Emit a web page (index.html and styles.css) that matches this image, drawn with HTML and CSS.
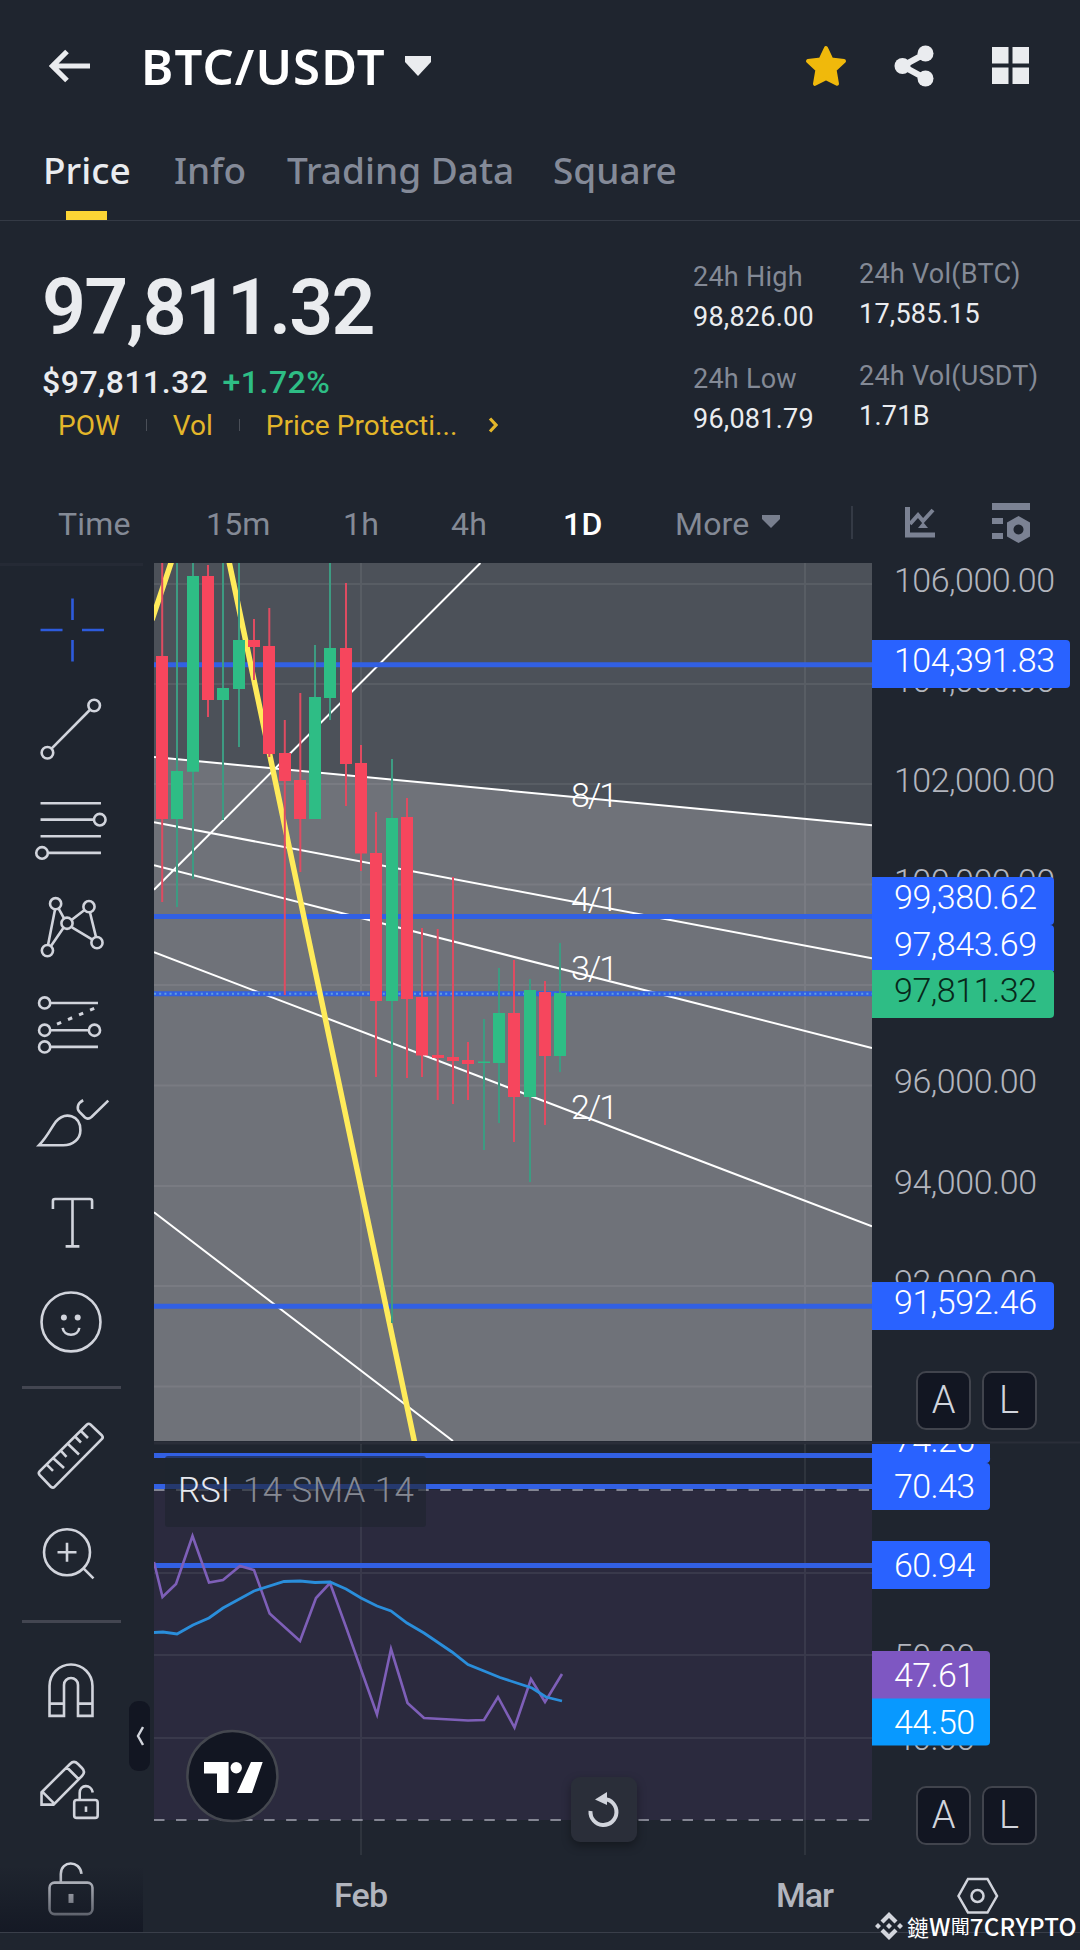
FILE: index.html
```html
<!DOCTYPE html>
<html lang="en">
<head>
<meta charset="utf-8">
<title>BTC/USDT</title>
<link rel="stylesheet" href="styles.css">
</head>
<body>
<main class="app">
  <header class="header">
    <svg class="back" width="42" height="34" viewBox="0 0 42 34"><path d="M41 17H4M18 2.500 3.500 17 18 31.500" fill="none" stroke="#eaecef" stroke-width="5.200"/></svg>
    <h1 class="pair">BTC/USDT</h1>
    <svg class="pair-caret" width="26" height="20" viewBox="0 0 26 20"><path d="M0 0H26V6L13 20 0 6Z" fill="#eaecef"/></svg>
    <svg class="act" width="42" height="42" viewBox="0 0 42 42"><path d="M21 3 26.300 14.400 39 16 29.600 24.800 32 38.800 21 33.200 10 38.800 12.400 24.800 3 16 15.700 14.400Z" fill="#f0b90b" stroke="#f0b90b" stroke-width="4" stroke-linejoin="round"/></svg>
    <svg class="act" width="40" height="42" viewBox="0 0 40 42"><path d="M31.500 8.500 8.500 21 31.500 33.500" fill="none" stroke="#eaecef" stroke-width="6"/><g fill="#eaecef"><circle cx="31.500" cy="8.500" r="8"/><circle cx="8.500" cy="21" r="8"/><circle cx="31.500" cy="33.500" r="8"/></g></svg>
    <svg class="act" width="37" height="37" viewBox="0 0 37 37"><path d="M0 0H16.500V16.500H0ZM20.500 0H37V16.500H20.500ZM0 20.500H16.500V37H0ZM20.500 20.500H37V37H20.500Z" fill="#eaecef"/></svg>
  </header>

  <nav class="tabs">
    <span class="tab tab-on">Price</span><span class="tab">Info</span><span class="tab">Trading Data</span><span class="tab">Square</span>
  </nav>

  <section class="ticker">
    <div class="quote">
      <div class="last">97,811.32</div>
      <div class="fiat"><span class="fiat-price">$97,811.32</span><span class="change">+1.72%</span></div>
      <div class="tags"><span>POW</span><i></i><span>Vol</span><i></i><span class="protect">Price Protecti...</span>
        <svg width="10" height="16" viewBox="0 0 10 16"><path d="M2 1.500 8 8 2 14.500" fill="none" stroke="#e3b62a" stroke-width="3.200"/></svg></div>
    </div>
    <dl class="stats"><dt>24h High</dt><dd>98,826.00</dd><dt>24h Low</dt><dd>96,081.79</dd></dl>
    <dl class="stats stats-vol"><dt>24h Vol(BTC)</dt><dd>17,585.15</dd><dt>24h Vol(USDT)</dt><dd>1.71B</dd></dl>
  </section>

  <nav class="intervals">
    <span>Time</span><span>15m</span><span>1h</span><span>4h</span><span class="on">1D</span>
    <span class="more">More<svg width="18" height="13" viewBox="0 0 18 13"><path d="M0 0H18V4L9 13 0 4Z" fill="#787f8e"/></svg></span>
    <i class="bar"></i>
    <svg class="indicator" width="30" height="31" viewBox="0 0 30 31"><path d="M2.500 0V28H30" fill="none" stroke="#7b8293" stroke-width="5"/><path d="M5 17 13 8 18 14 28 3" fill="none" stroke="#7b8293" stroke-width="4"/><path d="M13 21 18 15 23 21Z" fill="#7b8293"/></svg>
    <svg class="settings" width="38" height="40" viewBox="0 0 38 40"><path d="M0 0H38V7H0ZM0 15H11V21H0ZM0 30H11V36H0Z" fill="#7b8293"/><path fill-rule="evenodd" d="M26.500 13 38 19.500V33.500L26.500 40 15 33.500V19.500ZM26.500 21.500a5 5 0 1 0 .01 0Z" fill="#7b8293"/></svg>
  </nav>

  <section class="workspace">
    <aside class="tools">
      <svg viewBox="-40 -50 80 99"><path class="cross" d="M1.500-31.500V-10M1.500 10V31.500M-30.500 0H-8.500M11 0H33"/></svg>
      <svg viewBox="-40 -50 80 99"><path d="M-19.500 19.700 19.300-19.500"/><circle cx="23.200" cy="-23.500" r="5.800"/><circle cx="-23.600" cy="23.800" r="5.800"/></svg>
      <svg viewBox="-40 -50 80 99"><path d="M-30.500-24.700H30M-30.500-8.300H22.500M-30.500 8.300H30M-23 25H30"/><circle cx="28.800" cy="-8.300" r="5.800"/><circle cx="-29" cy="25" r="5.800"/></svg>
      <svg viewBox="-40 -50 80 99"><path d="M-16-17.500-23 18M-12.500-18.500-7-8.500M-7.500.8-20 19M.5-7 13.500-17M1 .5 21 12.500M19-14.500 25 10"/><circle cx="-15.400" cy="-23.300" r="5.600"/><circle cx="18" cy="-20.300" r="5.600"/><circle cx="-4" cy="-3.700" r="5.600"/><circle cx="26" cy="15.700" r="5.600"/><circle cx="-23.600" cy="23.700" r="5.600"/></svg>
      <svg viewBox="-40 -50 80 99"><path d="M-20.500-23H27M-20.500 4.300H17.500M-20.500 21H27"/><path d="M-14-1.700 24-18" stroke-dasharray="4.500 7.500" stroke-width="3"/><circle cx="-26.400" cy="-23" r="5.600"/><circle cx="-26.400" cy="4.300" r="5.600"/><circle cx="23.500" cy="4.300" r="5.600"/><circle cx="-26.400" cy="21" r="5.600"/></svg>
      <svg viewBox="-40 -50 80 99"><path d="M-32 21.300C-23 12-20 4-15.400-2-6-13 9.400-9 9.400 6.300 9.400 15 2 21.300-7.800 21.300ZM12.200-23.700C7-21 5-16 8.500-12L14-6.500Q17-4 20.500-7L37.300-23.300"/></svg>
      <svg viewBox="-40 -50 80 99"><path d="M-18.100-14V-22Q-18.100-24-16-24H19Q21.100-24 21.100-22V-14M1.500-24V23.500M-5.400 23.500H8.400"/></svg>
      <svg viewBox="-40 -50 80 99"><circle r="29.500"/><g class="solid"><circle cx="-7.100" cy="-4.500" r="3"/><circle cx="6.700" cy="-4.500" r="3"/></g><path d="M-8.300 6C-7.500 15 7.500 15 8.300 6"/></svg>
      <hr>
      <svg viewBox="-40 -50 80 99"><path d="M16-30.500Q17.700-32 19.500-30.500L31-19.500Q32.500-17.700 31-16L-16.500 32Q-18 33.500-20 32L-31.500 20Q-33 18-31.500 16.500ZM-24.500 9.500-18 16M-18 3-7 13M-10.500-4.500-4.500 2M-3.500-11.500 8-.5M4-18.500 10-12.500M9.500-24.500 17-17"/></svg>
      <svg viewBox="-40 -50 80 99"><circle cx="-4" cy="-1.700" r="23"/><path d="M-13.500-1.700H5.500M-4-11.200V7.800M12 14 22.500 24.500"/></svg>
      <hr class="wide">
      <svg viewBox="-40 -50 80 99"><path d="M-21.500 25V-5A21.500 21.500 0 0 1 21.500-5V25H7V-6A7 7 0 0 0-7-6V25ZM-21.500 12.700H-7M7 12.700H21.500"/></svg>
      <svg viewBox="-40 -50 80 99"><path d="M-29.500 14.700V2.300L-1-26Q3-30 7-26L11-22Q15-18 11-14L-17.500 14.700ZM-28 2.500-17 13.500M-4-22.500 7.500-11M8.700 10V3C8.700-6 20.500-6 21.800 2.500"/><rect x="3.200" y="10" width="23.500" height="18" rx="2.500"/><path d="M15 16.500V22"/></svg>
      <svg viewBox="-40 -50 80 99"><path d="M-10.200-7V-15C-10-29 9-29 10.500-15"/><rect x="-21.500" y="-6.300" width="43" height="31.500" rx="5"/><path d="M0 5V14" stroke-width="5"/></svg>
      <div class="fade"></div>
      <div class="handle"><svg width="8" height="20" viewBox="0 0 8 20"><path d="M7 1 2 10 7 19" fill="none" stroke="#d1d4dc" stroke-width="2.400"/></svg></div>
    </aside>

    <!-- plot: price pane, RSI pane and time scale -->
    <svg class="plot" width="718" height="1369" viewBox="154 563 718 1369">
      <defs><clipPath id="price"><rect x="154" y="563" width="718" height="878"/></clipPath></defs>
      <rect x="154" y="563" width="718" height="878" fill="#4c5159"/>
      <path d="M154 757 872 825.300V1441H154Z" fill="#6f7279"/>
      <path class="grid" d="M154 584H872M154 684H872M154 784H872M154 884.500H872M154 985H872M154 1085.500H872M154 1186H872M154 1286H872M154 1386.500H872M361 563V1441M805 563V1441"/>
      <g clip-path="url(#price)">
        <path class="gann" d="M154 757 872 825.300M154 822.300 872 958.300M154 865.300 872 1048M154 952.300 872 1226.300M154 1212.300 453 1441M154 889.700 480.400 563"/>
        <path class="level" d="M154 664.700H872M154 916.500H872M154 993.700H872M154 1306.300H872"/>
        <path d="M154 993.700H872" stroke="#61a0dc" stroke-width="2" stroke-dasharray="2 3.200"/>
        <path d="M152 620 172 560M228.700 560 414.500 1442" fill="none" stroke="#ffeb5a" stroke-width="5.500"/>
        <path d="M177 563V907M193 563V879M223 563V820M239 563V747M315 645V819M330 563V720M392 759V1323M484 1019V1150M499 968V1123M530 979V1182M560 943V1072" stroke="#3d9b82" stroke-width="2"/>
        <path d="M162.200 563V902M208 565V717M254 619V680M269.300 608V757M284.800 720V995M300.300 693V872M346 583V806M361 745V871M376 812V1077M407 798V1078M422 928V1077M437.700 929V1100M453 877V1104M468 1042V1100M514 960V1142M545 981V1125" stroke="#df4b61" stroke-width="2"/>
        <path d="M171 771h12v48h-12zM187 576h12v195.700h-12zM217 688h12v12h-12zM233 640h12v49h-12zM309 697h12v122h-12zM324 648h12v50h-12zM386 818h12v183h-12zM478 1061.500h12v1.500h-12zM493 1013h12v50h-12zM524 990h12v107h-12zM554 993h12v63h-12z" fill="#2ebd85"/>
        <path d="M156 656h12v163h-12zM202 576h12v124h-12zM248 640h12v7h-12zM263 646h12v108h-12zM279 753h12v28h-12zM294 780h12v39h-12zM340 648h12v116h-12zM355 763h12v90.500h-12zM370 853h12v148h-12zM401 817h12v182h-12zM416 997h12v58.500h-12zM432 1055h12v3h-12zM447 1057h12v4h-12zM462 1060h12v4h-12zM508 1013h12v84h-12zM539 992h12v64h-12z" fill="#f6465d"/>
        <g class="gann-label"><text x="571" y="806.500" textLength="47">8/1</text><text x="571" y="911" textLength="47">4/1</text><text x="571" y="980" textLength="47">3/1</text><text x="571" y="1119" textLength="47">2/1</text></g>
      </g>

      <path d="M154 1443H872" stroke="#2a2e39" stroke-width="3"/>
      <rect x="154" y="1490" width="718" height="330" fill="#2b2a3e"/>
      <path class="grid grid-rsi" d="M154 1573H872M154 1655H872M154 1738H872M361 1444V1855M805 1444V1855"/>
      <path class="level" d="M154 1455.500H872M154 1486.500H872M154 1565.500H872"/>
      <path d="M154 1490H872M154 1820H872" stroke="#848693" stroke-width="2" stroke-dasharray="10.500 11.520"/>
      <polyline points="154,1562 162.500,1597 176,1584 192.500,1536 209,1582.500 223,1580 240,1566 254,1570 269.600,1613.500 300,1641 316,1598 330,1583 346,1627 377,1714.500 391,1649 407.500,1703 424,1718 468,1720.500 484,1720 498,1697 514.500,1727.500 531,1679 545,1702 562,1674" fill="none" stroke="#7e5fb8" stroke-width="2.600"/>
      <polyline points="154,1632.500 163,1632 177,1634 193,1625 209,1618 223,1608 254,1591 284,1581.500 300,1581 315,1582.500 330,1582 346,1589 361,1598 377,1606 391,1611 407,1623 424,1633 452,1652 468,1664.500 484,1671 500,1677.500 532,1688 546,1697 562,1701" fill="none" stroke="#2a8edb" stroke-width="2.800"/>
      <rect x="165" y="1456" width="261" height="71" rx="3" fill="#1e2530" fill-opacity=".65"/>
      <text class="rsi-name" x="178" y="1502" textLength="52">RSI</text><text class="rsi-args" x="243" y="1502" textLength="171">14 SMA 14</text>
      <circle cx="232.400" cy="1776" r="45" fill="#121622" stroke="#44474f" stroke-width="2.500"/>
      <path d="M204 1762H228.600V1793H217V1773.500H204ZM251 1762H262.700L252 1793H237Z" fill="#fff"/><circle cx="236.200" cy="1767.700" r="5.700" fill="#fff"/>
      <rect class="reset" x="571" y="1777" width="66" height="65" rx="9"/>
      <path d="M590.500 1811A13 13 0 1 0 604 1799" fill="none" stroke="#d1d4dc" stroke-width="4"/><path d="M595 1799.500 607 1792V1805Z" fill="#d1d4dc"/>
      <g class="months"><text x="361" y="1907" textLength="54">Feb</text><text x="805" y="1907" textLength="58">Mar</text></g>
    </svg>

    <!-- price scale -->
    <svg class="scale" width="208" height="1369" viewBox="872 563 208 1369">
      <g class="tick"><text x="894" y="592" textLength="161">106,000.00</text><text x="894" y="692" textLength="161">104,000.00</text><text x="894" y="792" textLength="161">102,000.00</text><text x="894" y="893" textLength="161">100,000.00</text><text x="894" y="1093" textLength="143">96,000.00</text><text x="894" y="1194" textLength="143">94,000.00</text><text x="894" y="1294" textLength="143">92,000.00</text><text x="894" y="1668" textLength="81">50.00</text><text x="894" y="1749.500" textLength="81">40.00</text></g>
      <path d="M872 640h194a4 4 0 0 1 4 4v40a4 4 0 0 1-4 4h-194zM872 877h178a4 4 0 0 1 4 4v40a4 4 0 0 1-4 4 4 4 0 0 1 4 4v42h-182zM872 1282h178a4 4 0 0 1 4 4v40a4 4 0 0 1-4 4h-178zM872 1444h118v14a4 4 0 0 1-4 5 4 4 0 0 1 4 4v39a4 4 0 0 1-4 4h-114zM872 1541h114a4 4 0 0 1 4 4v40a4 4 0 0 1-4 4h-114z" fill="#2962ff"/>
      <path d="M872 970h178a4 4 0 0 1 4 4v40a4 4 0 0 1-4 4h-178z" fill="#2ebd85"/>
      <path d="M872 1651h114a4 4 0 0 1 4 4v44h-118z" fill="#7e57c2"/>
      <path d="M872 1698.500h118v43a4 4 0 0 1-4 4h-114z" fill="#0899ff"/>
      <clipPath id="rsiTop"><rect x="872" y="1444" width="208" height="30"/></clipPath>
      <g class="tick tick-on"><text x="894" y="672" textLength="161">104,391.83</text><text x="894" y="909" textLength="143">99,380.62</text><text x="894" y="955.500" textLength="143">97,843.69</text><text class="last-tick" x="894" y="1001.700" textLength="143">97,811.32</text><text x="894" y="1313.700" textLength="143">91,592.46</text><text x="894" y="1452" textLength="81" clip-path="url(#rsiTop)">74.26</text><text x="894" y="1498" textLength="81">70.43</text><text x="894" y="1577" textLength="81">60.94</text><text x="894" y="1687" textLength="81">47.61</text><text x="894" y="1734" textLength="81">44.50</text></g>
      <path d="M872 1442.500H1080" stroke="#2a2e39" stroke-width="2"/>
      <g fill="#121622" stroke="#41444d" stroke-width="2"><rect x="917" y="1372" width="53" height="57" rx="9"/><rect x="983" y="1372" width="53" height="57" rx="9"/><rect x="917" y="1787" width="53" height="57" rx="9"/><rect x="983" y="1787" width="53" height="57" rx="9"/></g>
      <g class="mode"><text x="943.500" y="1413">A</text><text x="1009" y="1413">L</text><text x="943.500" y="1828">A</text><text x="1009" y="1828">L</text></g>
      <g fill="none" stroke="#d1d4dc" stroke-width="2.500"><path d="M968 1879H987.500L997 1896 987.500 1912.500H968L958.500 1896Z"/><circle cx="977.500" cy="1896" r="6"/></g>
    </svg>
  </section>

  <footer class="credit">
    <svg width="28" height="28" viewBox="0 0 28 28"><path d="M14 0 22.500 8.500 19.500 11.500 14 6 8.500 11.500 5.500 8.500ZM14 28 22.500 19.500 19.500 16.500 14 22 8.500 16.500 5.500 19.500ZM14 11 17 14 14 17 11 14ZM3 11 6 14 3 17 0 14ZM25 11 28 14 25 17 22 14Z" fill="#d3d6dd"/></svg>
    <span class="credit-name"><span class="han">鏈</span>W<span class="han han-narrow">聞</span>7CRYPTO</span>
  </footer>
</main>
</body>
</html>
```
FILE: styles.css
```css
* { box-sizing: border-box; margin: 0; padding: 0; }
body { background: #1f252f; color: #eaecef; font-family: Roboto, "Liberation Sans", sans-serif; }
.app { position: relative; width: 1080px; height: 1950px; overflow: hidden; }

.header { display: flex; align-items: center; height: 131px; padding: 0 31px 0 49px; }
.pair { margin-left: 50px; width: 258px; font: 600 49px/60px "Noto Sans", sans-serif; letter-spacing: 1.1px; color: #fff; white-space: nowrap; }
.pair-caret { margin-left: 6px; margin-right: 374px; }
.act { flex: none; margin-right: 47px; }
.act + .act { margin-right: 58px; }
.act + .act + .act { margin-right: 0; }
.back, .pair-caret { flex: none; }

.tabs { display: grid; grid-template-columns: 131px 113px 266px auto; height: 90px; padding-left: 43px; border-bottom: 1px solid #343a45; font: 500 37px/77px "Noto Sans", sans-serif; color: #848a98; white-space: nowrap; }
.tab-on { position: relative; color: #eaecef; }
.tab-on::after { content: ""; position: absolute; left: 23px; bottom: 0; width: 41px; height: 9px; background: #fcd535; }

.ticker { display: grid; grid-template-columns: 651px 166px auto; height: 264px; padding: 36px 0 0 42px; white-space: nowrap; }
.last { font-size: 77px; line-height: 102px; height: 100px; font-weight: 600; letter-spacing: -1.8px; }
.fiat { display: flex; gap: 14px; font-size: 32px; line-height: 50px; font-weight: 500; letter-spacing: .5px; }
.change { color: #2ebd85; }
.tags { display: flex; align-items: center; height: 36px; padding-left: 16px; font-size: 28px; color: #e3b62a; }
.tags i { width: 1px; height: 12px; margin: 0 26px; background: #4a4f58; }
.protect { letter-spacing: .1px; }
.tags svg { margin-left: 30px; }
.stats { font-size: 27px; line-height: 40px; letter-spacing: .25px; }
.stats-vol { margin-top: -3px; }
.stats dt { color: #848a96; }
.stats dd { margin-bottom: 22px; }

.intervals { display: grid; grid-template-columns: 148px 137px 108px 112px 112px 176px 54px 87px auto; align-items: center; height: 78px; padding-left: 58px; font-size: 32px; letter-spacing: .2px; color: #848a96; white-space: nowrap; }
.on { color: #fff; font-weight: 500; }
.more { display: flex; align-items: center; gap: 12px; }
.more svg { margin-top: -6px; }
.bar { width: 2px; height: 33px; margin-top: -4px; background: #343a45; }
.indicator { margin-top: -4px; }
.settings { margin-top: -2px; }

.workspace { display: grid; grid-template-columns: 154px 718px 208px; height: 1370px; border-bottom: 1px solid #3a3f4a; }
.tools { position: relative; display: flex; flex-direction: column; width: 143px; height: 1369px; padding-top: 14px; border-top: 3px solid #252a35; }
.tools > svg { flex: none; width: 80px; height: 98.9px; margin-left: 31px; fill: none; stroke: #d1d4dc; stroke-width: 2.600; overflow: visible; }
.tools .cross { stroke: #2d5bdc; }
.tools .solid { fill: #d1d4dc; stroke: none; }
.tools hr { flex: none; width: 99px; height: 3px; margin: 15px 0 16px 22px; border: 0; background: #434651; }
.tools .wide { margin: 17px 0 18px 22px; }
.fade { position: absolute; left: 0; bottom: 0; width: 143px; height: 66px; background: linear-gradient(rgba(18,22,34,0), rgba(18,22,34,.8)); }
.handle { position: absolute; left: 129px; top: 1135px; width: 21px; height: 70px; display: grid; place-items: center; border-radius: 9px; background: #121622; }

.plot, .scale { display: block; }
.grid { fill: none; stroke: #fff; stroke-opacity: .07; stroke-width: 2; }
.gann { fill: none; stroke: #fff; stroke-width: 2; }
.level { fill: none; stroke: #3260e3; stroke-width: 5; }
.gann-label { fill: #fff; font-size: 34px; font-weight: 300; }
.rsi-name { fill: #e6e8ee; font-size: 35px; font-weight: 300; }
.rsi-args { fill: #868993; font-size: 35px; font-weight: 300; }
.reset { fill: #2a2e39; filter: drop-shadow(0 4px 5px rgba(0,0,0,.35)); }
.months { fill: #b2b5be; font-size: 34px; font-weight: 500; text-anchor: middle; }
.tick { fill: #b2b5be; font-size: 34px; font-weight: 300; }
.tick-on { fill: #fff; }
.tick-on .last-tick { fill: #07281a; }
.mode { fill: #d1d4dc; font-size: 38px; font-weight: 300; text-anchor: middle; }

.credit { position: absolute; left: 875px; top: 1905px; height: 42px; display: flex; align-items: center; gap: 4px; color: #fff; white-space: nowrap; }
.credit-name { display: flex; align-items: center; font: 500 24px/42px "Noto Sans CJK TC", sans-serif; letter-spacing: .3px; }
.han { font-size: 22px; font-weight: 400; letter-spacing: 0; }
.han-narrow { font-size: 19px; }
```
